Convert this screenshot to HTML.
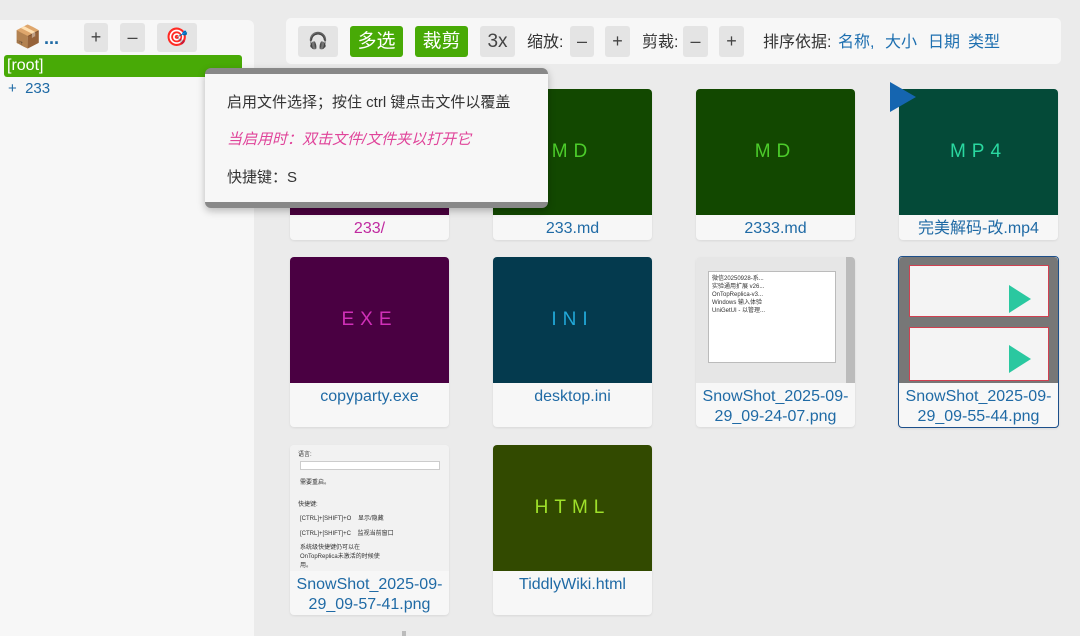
<!DOCTYPE html><html><head><meta charset="utf-8"><style>
*{box-sizing:border-box;margin:0;padding:0}
body{width:1080px;height:636px;background:#ebebeb;font-family:"Liberation Sans","Noto Sans CJK SC",sans-serif;position:relative;overflow:hidden}
.a{position:absolute}
.side{left:0;top:20px;width:254px;height:616px;background:#f7f7f7;border-radius:0 6px 0 0}
.btn{position:absolute;background:#e4e4e4;border-radius:3px;color:#444;text-align:center;font-size:18px}
.tb{left:286px;top:18px;width:775px;height:46px;background:#f7f7f7;border-radius:5px}
.g{background:#48aa06;color:#fff;font-size:19px;border-radius:3px}
.lbl{color:#333;font-size:16px;line-height:20px}
.lk{color:#1d6fb0;font-size:16px;line-height:20px}
.tile{position:absolute;width:159px;background:#f7f7f7;border-radius:4px;box-shadow:0 1px 2px rgba(0,0,0,.08)}
.th{height:126px;border-radius:4px 4px 0 0;display:flex;align-items:center;justify-content:center;font-size:19px;letter-spacing:6px;overflow:hidden}
.nm{color:#1f6aa5;font-size:16px;text-align:center;line-height:20px;padding-top:4px}
</style></head><body>
<div class="a side"></div>
<div class="a" style="left:14px;top:24px;font-size:22px">📦</div>
<div class="a" style="left:44px;top:28px;color:#1f6aa5;font-size:18px;font-weight:bold">...</div>
<div class="btn" style="left:84px;top:23px;width:24px;height:29px;line-height:28px">+</div>
<div class="btn" style="left:120px;top:23px;width:25px;height:29px;line-height:28px">–</div>
<div class="btn" style="left:157px;top:23px;width:40px;height:29px;line-height:29px;color:#e0406a">🎯</div>
<div class="a" style="left:4px;top:55px;width:238px;height:22px;background:#48aa06;border-radius:3px;color:#fff;font-size:16px;padding-left:3px;line-height:22px">[root]</div>
<div class="a" style="left:8px;top:80px;color:#1f6aa5;font-size:15px">+&nbsp; 233</div>

<div class="a tb"></div>
<div class="btn" style="left:298px;top:26px;width:40px;height:31px;line-height:31px;color:#bbb;font-size:16px">🎧</div>
<div class="btn g" style="left:350px;top:26px;width:53px;height:31px;line-height:31px">多选</div>
<div class="btn g" style="left:415px;top:26px;width:53px;height:31px;line-height:31px">裁剪</div>
<div class="btn" style="left:480px;top:26px;width:35px;height:31px;line-height:31px;font-size:19px">3x</div>
<div class="a lbl" style="left:527px;top:33px">缩放:</div>
<div class="btn" style="left:570px;top:26px;width:24px;height:31px;line-height:31px">–</div>
<div class="btn" style="left:605px;top:26px;width:25px;height:31px;line-height:31px">+</div>
<div class="a lbl" style="left:642px;top:33px">剪裁:</div>
<div class="btn" style="left:683px;top:26px;width:25px;height:31px;line-height:31px">–</div>
<div class="btn" style="left:719px;top:26px;width:25px;height:31px;line-height:31px">+</div>
<div class="a lbl" style="left:763px;top:33px">排序依据:</div>
<div class="a lk" style="left:838px;top:33px">名称,</div>
<div class="a lk" style="left:885px;top:33px">大小</div>
<div class="a lk" style="left:928px;top:33px">日期</div>
<div class="a lk" style="left:968px;top:33px">类型</div>

<div class="tile" style="left:290px;top:89px"><div class="th" style="background:#4a003e;color:#e040c0">DIR</div><div class="nm" style="color:#c02aa0;height:25px">233/</div></div>
<div class="tile" style="left:493px;top:89px"><div class="th" style="background:#124800;color:#4ccc2a">MD</div><div class="nm" style="height:25px">233.md</div></div>
<div class="tile" style="left:696px;top:89px"><div class="th" style="background:#124800;color:#4ccc2a">MD</div><div class="nm" style="height:25px">2333.md</div></div>
<div class="tile" style="left:899px;top:89px"><div class="th" style="background:#044a38;color:#2ad8a0">MP4</div><div class="nm" style="height:25px">完美解码-改.mp4</div></div>
<div class="a" style="left:890px;top:82px;width:0;height:0;border-left:26px solid #1565b0;border-top:15px solid transparent;border-bottom:15px solid transparent"></div>

<div class="tile" style="left:290px;top:257px"><div class="th" style="background:#4a0042;color:#d030b8">EXE</div><div class="nm" style="height:44px">copyparty.exe</div></div>
<div class="tile" style="left:493px;top:257px"><div class="th" style="background:#043a4e;color:#22a8d8">INI</div><div class="nm" style="height:44px">desktop.ini</div></div>
<div class="tile" style="left:696px;top:257px"><div class="th" style="background:#e6e6e6;display:block;position:relative"><div class="a" style="left:12px;top:14px;width:128px;height:92px;background:#fff;border:1px solid #bbb"></div><div class="a" style="left:150px;top:0;width:9px;height:126px;background:#bbb"></div><div class="a" style="left:16px;top:18px;font-size:6px;letter-spacing:0;color:#333;line-height:8px">微信20250928-系...<br>实验通用扩展 v26...<br>OnTopReplica-v3...<br>Windows 输入体验<br>UniGetUI - 以管理...</div></div><div class="nm" style="height:44px">SnowShot_2025-09-29_09-24-07.png</div></div>
<div class="tile" style="left:898px;top:256px;width:161px;border:1.5px solid #1c4f8a"><div class="th" style="background:#777;display:block;position:relative"><div class="a" style="left:10px;top:8px;width:140px;height:52px;background:#f4f4f4;border:1px solid #d04050"></div><div class="a" style="left:10px;top:70px;width:140px;height:54px;background:#f4f4f4;border:1px solid #d04050"></div><div class="a" style="left:110px;top:28px;width:0;height:0;border-left:22px solid #2ac8a0;border-top:14px solid transparent;border-bottom:14px solid transparent"></div><div class="a" style="left:110px;top:88px;width:0;height:0;border-left:22px solid #2ac8a0;border-top:14px solid transparent;border-bottom:14px solid transparent"></div></div><div class="nm" style="height:44px">SnowShot_2025-09-29_09-55-44.png</div></div>

<div class="tile" style="left:290px;top:445px"><div class="th" style="background:#f2f2f2;display:block;position:relative;color:#333;font-size:6px;letter-spacing:0;line-height:9px"><div class="a" style="left:8px;top:6px">语言:</div><div class="a" style="left:10px;top:16px;width:140px;height:9px;background:#fff;border:1px solid #ccc"></div><div class="a" style="left:10px;top:34px">需要重启。</div><div class="a" style="left:8px;top:56px">快捷键:</div><div class="a" style="left:10px;top:70px">[CTRL]+[SHIFT]+O &nbsp;&nbsp; 显示/隐藏</div><div class="a" style="left:10px;top:85px">[CTRL]+[SHIFT]+C &nbsp;&nbsp; 监视当前窗口</div><div class="a" style="left:10px;top:99px">系统级快捷键仍可以在<br>OnTopReplica未激活的时候使<br>用。</div></div><div class="nm" style="height:44px">SnowShot_2025-09-29_09-57-41.png</div></div>
<div class="tile" style="left:493px;top:445px"><div class="th" style="background:#324a00;color:#9ee02a">HTML</div><div class="nm" style="height:44px">TiddlyWiki.html</div></div>

<div class="a" style="left:205px;top:68px;width:343px;height:140px;background:#f7f7f7;border-top:6px solid #888;border-bottom:6px solid #888;border-radius:6px;box-shadow:0 3px 8px rgba(0,0,0,.25)"></div>
<div class="a" style="left:227px;top:91px;font-size:15px;color:#333">启用文件选择；按住 ctrl 键点击文件以覆盖</div>
<div class="a" style="left:227px;top:128px;font-size:15px;color:#e0449a;font-style:italic">当启用时：双击文件/文件夹以打开它</div>
<div class="a" style="left:227px;top:166px;font-size:15px;color:#333">快捷键：S</div>
<div class="a" style="left:402px;top:631px;width:4px;height:5px;background:#bbb"></div>
</body></html>
